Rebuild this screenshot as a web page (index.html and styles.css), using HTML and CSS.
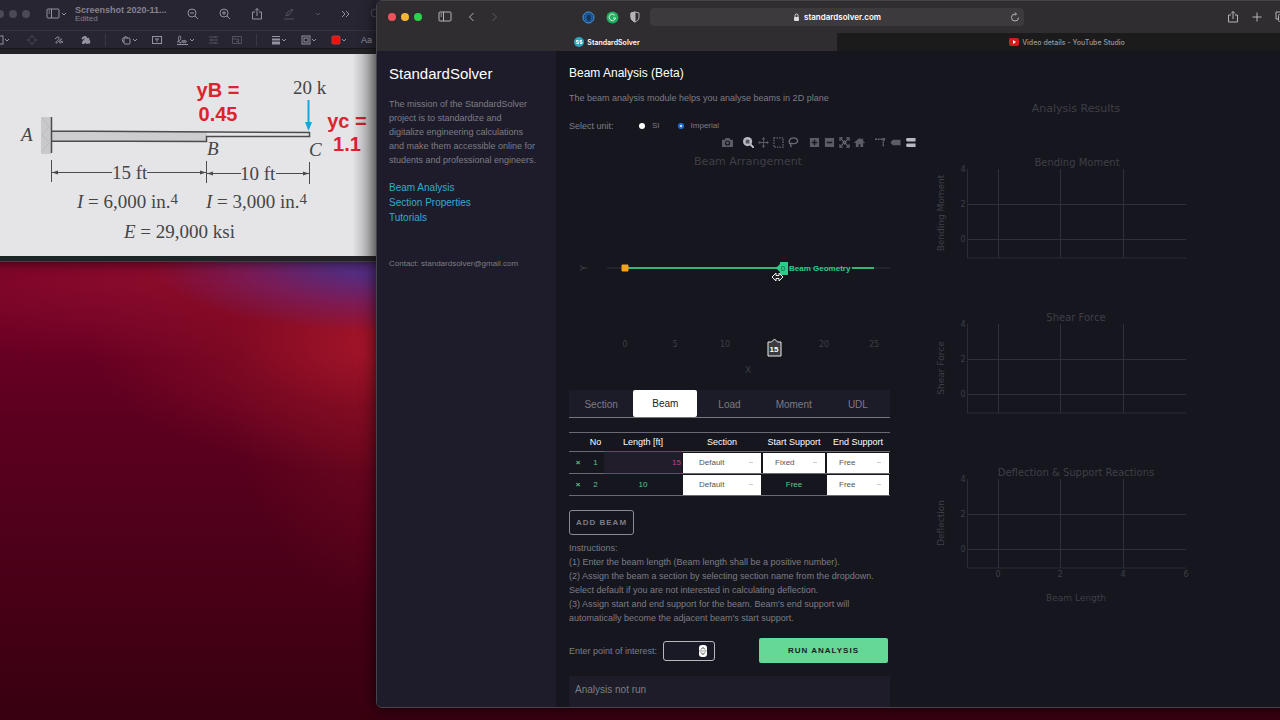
FILE: index.html
```html
<!DOCTYPE html>
<html lang="en">

<head>
    <meta charset="UTF-8">
    <meta name="viewport" content="width=device-width, initial-scale=1.0">
    <title>StandardSolver</title>
    <link rel="stylesheet" href="styles.css">
</head>

<body>
    <!-- shared icons -->
    <svg class="sprite" aria-hidden="true">
        <symbol id="chev" viewBox="0 0 6 10"><path d="M1 4l2 2 2-2" /></symbol>
        <symbol id="panel" viewBox="0 0 14 12"><rect x="1" y="1" width="12" height="9" rx="1" /><path d="M5.500 1v9M2.500 3h1.500M2.500 5h1.500" /></symbol>
        <symbol id="share" viewBox="0 0 12 14"><path d="M4 5H1.500v7h9V5H8M6 9V1.500M4 3.500l2-2 2 2" /></symbol>
        <symbol id="pen" viewBox="0 0 10 10"><path d="M1 4c2-2 4-3 4-1S1 7 2 8s3-3 5-4-3 4-1 4 1-2 2-2 0 2 1 2" /></symbol>
    </svg>

    <div class="desktop">
        <section class="preview">
            <header class="preview-bar">
                <div class="dots"><i></i><i></i><i></i></div>
                <button class="icon-btn view-btn" aria-label="View"><svg width="14" height="12"><use href="#panel" /></svg><svg width="6" height="10"><use href="#chev" /></svg></button>
                <div class="file-name">
                    <strong>Screenshot 2020-11...</strong>
                    <span>Edited</span>
                </div>
                <div class="preview-tools">
                    <button class="icon-btn" aria-label="Zoom out"><svg width="12" height="12" viewBox="0 0 12 12"><circle cx="5" cy="5" r="4" /><path d="M8 8l3 3M3 5h4" /></svg></button>
                    <button class="icon-btn" aria-label="Zoom in"><svg width="12" height="12" viewBox="0 0 12 12"><circle cx="5" cy="5" r="4" /><path d="M8 8l3 3M3 5h4M5 3v4" /></svg></button>
                    <button class="icon-btn" aria-label="Share"><svg width="12" height="14"><use href="#share" /></svg></button>
                    <button class="icon-btn faint" aria-label="Markup"><svg width="12" height="12" viewBox="0 0 12 12"><path d="M3 8l1-3 5-4 1 1-4 5zM1 11h10" /></svg></button>
                    <button class="icon-btn faint" aria-label="Markup options"><svg width="6" height="10"><use href="#chev" /></svg></button>
                    <button class="icon-btn" aria-label="More"><svg width="9" height="8" viewBox="0 0 9 8"><path d="M1 1l3 3-3 3M5 1l3 3-3 3" /></svg></button>
                    <button class="icon-btn faint" aria-label="Search"><svg width="12" height="12" viewBox="0 0 12 12"><circle cx="5" cy="5" r="4" /><path d="M8 8l3 3" /></svg></button>
                </div>
            </header>

            <div class="markup-bar">
                <div class="markup-group draw">
                    <button class="icon-btn" aria-label="Selection"><svg width="10" height="10" viewBox="0 0 10 10"><rect x="0" y="1" width="9" height="8" /></svg><svg width="6" height="10"><use href="#chev" /></svg></button>
                    <button class="icon-btn faint" aria-label="Instant alpha"><svg width="10" height="10" viewBox="0 0 10 10"><path d="M5 0v3M5 7v3M0 5h3M7 5h3M2 2l1 1M7 7l1 1M8 2L7 3M3 7L2 8" /></svg></button>
                    <button class="icon-btn" aria-label="Sketch"><svg width="10" height="10"><use href="#pen" /></svg></button>
                    <button class="icon-btn thick" aria-label="Draw"><svg width="10" height="10"><use href="#pen" /></svg></button>
                </div>
                <span class="divider"></span>
                <div class="markup-group">
                    <button class="icon-btn" aria-label="Shapes"><svg width="12" height="10" viewBox="0 0 12 10"><path d="M4 7H3a3 3 0 1 1 5-4" /><rect x="4" y="3" width="6" height="6" rx="1" /></svg><svg width="6" height="10"><use href="#chev" /></svg></button>
                    <button class="icon-btn" aria-label="Text"><svg width="10" height="10" viewBox="0 0 10 10"><rect x="0.500" y="1.500" width="9" height="7" /><path d="M3 4h4M5 4v3" /></svg></button>
                    <button class="icon-btn" aria-label="Sign"><svg width="13" height="10" viewBox="0 0 13 10"><path d="M1 7c3 0 5-5 3-6S2 8 4 8s2-3 3-3-1 3 0 3 1-3 2-3-1 3 0 3 1-2 2-2M1 9.500h11" /></svg><svg width="6" height="10"><use href="#chev" /></svg></button>
                    <button class="icon-btn faint" aria-label="Adjust color"><svg width="9" height="10" viewBox="0 0 9 10"><path d="M0 2h9M0 5h9M0 8h9M6 1v2M3 4v2M6 7v2" /></svg></button>
                    <button class="icon-btn faint" aria-label="Adjust size"><svg width="10" height="10" viewBox="0 0 10 10"><path d="M.5 1.500h9v7h-9zM.5 4h6v4.500M4 6.500h2" /></svg></button>
                </div>
                <span class="divider"></span>
                <div class="markup-group">
                    <button class="icon-btn" aria-label="Line style"><svg width="10" height="10" viewBox="0 0 10 10"><path d="M1 1.500h8" /><path d="M1 4.500h8" stroke-width="2" /><path d="M1 8h8" stroke-width="3" /></svg><svg width="6" height="10"><use href="#chev" /></svg></button>
                    <button class="icon-btn" aria-label="Border color"><svg width="10" height="10" viewBox="0 0 10 10"><rect x="1" y="1" width="8" height="8" /><rect x="3" y="3" width="4" height="4" /></svg><svg width="6" height="10"><use href="#chev" /></svg></button>
                    <button class="icon-btn" aria-label="Fill color"><svg width="10" height="10" viewBox="0 0 10 10"><rect x="1" y="1" width="8" height="8" rx="1" fill="#f5100a" stroke="#a8403e" /></svg><svg width="6" height="10"><use href="#chev" /></svg></button>
                    <button class="icon-btn font-btn">Aa</button>
                </div>
            </div>

            <svg class="drawing" width="376" height="202" viewBox="0 0 376 202" role="img" aria-label="Cantilever beam">
                <defs>
                    <linearGradient id="edge">
                        <stop offset="0" stop-color="#000" stop-opacity="0" />
                        <stop offset="1" stop-color="#000" stop-opacity="0.300" />
                    </linearGradient>
                </defs>
                <rect x="41" y="63" width="10" height="37" fill="#c9c9cb" />
                <path d="M43 64l6 9-7 8 7 8-7 8" stroke="#bbb" fill="none" />
                <path d="M51 77h156v10H51z" fill="#cdcdcf" />
                <g stroke="#4b4b4d" fill="none">
                    <path d="M51.500 63v36M51 77l258.500 1.500v4H206.500v5L51 87" stroke-width="1.500" />
                    <path d="M51.500 106v22M206.500 107v22M309.500 108v22M52 118.500h60M147 118.500h59M207 119.500h34M276 119.500h33" />
                </g>
                <path d="M52 118.500l6-2v4zM206 118.500l-6-2v4zM207 119.500l6-2v4zM309 119.500l-6-2v4z" fill="#4b4b4d" />
                <path d="M308.500 46v25" stroke="#18a5dc" stroke-width="2" />
                <path d="M305 68h7l-3.500 9z" fill="#18a5dc" />
                <g class="serif">
                    <text x="293" y="40">20 k</text>
                    <text x="21" y="87" class="it">A</text>
                    <text x="207" y="101" class="it">B</text>
                    <text x="309" y="102" class="it">C</text>
                    <text x="112" y="125">15 ft</text>
                    <text x="240" y="126">10 ft</text>
                    <text x="77" y="154"><tspan class="it">I</tspan> = 6,000 in.<tspan class="sup" dy="-4">4</tspan></text>
                    <text x="206" y="154"><tspan class="it">I</tspan> = 3,000 in.<tspan class="sup" dy="-4">4</tspan></text>
                    <text x="124" y="184"><tspan class="it">E</tspan> = 29,000 ksi</text>
                </g>
                <g class="note">
                    <text x="218" y="43">yB =</text>
                    <text x="218" y="67">0.45</text>
                    <text x="347" y="74">yc =</text>
                    <text x="347" y="97">1.1</text>
                </g>
                <rect x="352" width="24" height="202" fill="url(#edge)" />
            </svg>
        </section>

        <section class="browser">
            <header class="browser-bar">
                <div class="bar-left">
                    <div class="dots lights"><i></i><i></i><i></i></div>
                    <button class="icon-btn light" aria-label="Sidebar"><svg width="14" height="12"><use href="#panel" /></svg></button>
                    <button class="icon-btn light" aria-label="Back"><svg width="7" height="10" viewBox="0 0 7 10"><path d="M5.500 1l-4 4 4 4" /></svg></button>
                    <button class="icon-btn dim" aria-label="Forward"><svg width="7" height="10" viewBox="0 0 7 10"><path d="M1.500 1l4 4-4 4" /></svg></button>
                    <div class="extensions">
                        <button class="icon-btn" aria-label="Blocker"><svg width="13" height="13" viewBox="0 0 13 13"><circle cx="6.500" cy="6.500" r="5.500" fill="#173f70" stroke="#4aa3e8" /><circle cx="6.500" cy="6.500" r="4" fill="#1c62ad" stroke="none" /><path d="M5 4v4l1.500 2L8.500 8V4.500L6.500 4v3" fill="#173556" stroke="#173556" /></svg></button>
                        <button class="icon-btn" aria-label="Grammar"><svg width="13" height="13" viewBox="0 0 13 13"><circle cx="6.500" cy="6.500" r="6" fill="#25ad64" stroke="none" /><path d="M9 4.500A3.200 3.200 0 1 0 9.500 7H7" stroke="#d9f5e5" /></svg></button>
                        <button class="icon-btn light" aria-label="Privacy report"><svg width="10" height="12" viewBox="0 0 10 12"><path d="M5 1l4 1v4c0 3-2 4-4 5-2-1-4-2-4-5V2z" /><path d="M5 1v10c-2-1-4-2-4-5V2z" fill="#b5b3b6" /></svg></button>
                    </div>
                </div>
                <div class="address">
                    <svg width="7" height="9" viewBox="0 0 7 9"><rect x="1" y="4" width="5" height="4" rx="1" fill="#ddd" /><path d="M2 4V2.500a1.500 1.500 0 0 1 3 0V4" fill="none" stroke="#ddd" /></svg>
                    <span>standardsolver.com</span>
                    <button class="icon-btn light reload" aria-label="Reload"><svg width="10" height="10" viewBox="0 0 10 10"><path d="M8.500 5.500A3.500 3.500 0 1 1 5 2h1M5 .5L6.500 2 5 3.500" /></svg></button>
                </div>
                <div class="bar-right">
                    <button class="icon-btn light" aria-label="Share"><svg width="12" height="14"><use href="#share" /></svg></button>
                    <button class="icon-btn light" aria-label="New tab"><svg width="10" height="10" viewBox="0 0 10 10"><path d="M5 0.500v9M.5 5h9" /></svg></button>
                    <button class="icon-btn light" aria-label="Tab overview"><svg width="12" height="12" viewBox="0 0 12 12"><path d="M3 8H1V1h7v2" /><rect x="3.500" y="3.500" width="7" height="7" rx="1" /></svg></button>
                </div>
            </header>
            <nav class="browser-tabs">
                <a href="#" class="browser-tab current"><svg width="10" height="10" viewBox="0 0 10 10"><circle cx="5" cy="5" r="5" fill="#2fa5c0" /><path d="M4.500 3.500H2.500V5h2v1.500h-2M8 3.500H6V5h2v1.500H6" fill="none" stroke="#fff" /></svg>StandardSolver</a>
                <a href="#" class="browser-tab"><svg width="10" height="8" viewBox="0 0 10 8"><rect width="10" height="8" rx="2" fill="#d41a1a" /><path d="M4 2l3 2-3 2z" fill="#fff" /></svg>Video details - YouTube Studio</a>
            </nav>

            <div class="page">
                <aside class="sidebar">
                    <h1>StandardSolver</h1>
                    <p>The mission of the StandardSolver project is to standardize and digitalize engineering calculations and make them accessible online for students and professional engineers.</p>
                    <nav class="links">
                        <a href="#">Beam Analysis</a>
                        <a href="#">Section Properties</a>
                        <a href="#">Tutorials</a>
                    </nav>
                    <p class="contact">Contact: standardsolver@gmail.com</p>
                </aside>

                <main class="solver">
                    <h2>Beam Analysis (Beta)</h2>
                    <p class="intro">The beam analysis module helps you analyse beams in 2D plane</p>
                    <div class="units">
                        <span>Select unit:</span>
                        <label><input type="radio" name="unit">SI</label>
                        <label><input type="radio" name="unit" checked>Imperial</label>
                    </div>

                    <div class="modebar">
                        <div>
                            <button aria-label="Download plot"><svg viewBox="0 0 12 12"><path d="M0 3h3l1-2h4l1 2h3v8H0z" /><circle cx="6" cy="6.500" r="2.800" fill="#16161f" /><circle cx="6" cy="6.500" r="1.500" /></svg></button>
                        </div>
                        <div>
                            <button class="on" aria-label="Zoom"><svg viewBox="0 0 12 12"><circle cx="5" cy="5" r="5" /><path d="M8 7l4 4-1 1-4-4z" stroke="#b9b9c2" /><path d="M3 3h4v4H3z" fill="#55555f" /></svg></button>
                            <button aria-label="Pan"><svg viewBox="0 0 12 12"><path d="M6 0l2 2.500H6.500v3H9.500V4L12 6 9.500 8V6.500h-3v3H8L6 12 4 9.500h1.500v-3h-3V8L0 6l2.500-2v1.500h3v-3H4z" /></svg></button>
                            <button aria-label="Box select"><svg viewBox="0 0 12 12"><rect x="1" y="1" width="10" height="10" fill="none" stroke="#6a6a73" stroke-width="1.500" stroke-dasharray="1.500 1.300" /></svg></button>
                            <button aria-label="Lasso"><svg viewBox="0 0 12 12"><path d="M3 8C0 6 1 1 6 1s6 5 2 6-4-1-5 0 1 2 0 4" fill="none" stroke="#6a6a73" stroke-width="1.500" /></svg></button>
                        </div>
                        <div>
                            <button aria-label="Zoom in"><svg viewBox="0 0 12 12"><path d="M1 1h10v10H1z" /><path d="M3 6h6M6 3v6" stroke="#16161f" stroke-width="1.500" /></svg></button>
                            <button aria-label="Zoom out"><svg viewBox="0 0 12 12"><path d="M1 1h10v10H1z" /><path d="M3 6h6" stroke="#16161f" stroke-width="1.500" /></svg></button>
                            <button aria-label="Autoscale"><svg viewBox="0 0 12 12"><path d="M1 4V1h3M8 1h3v3M11 8v3H8M4 11H1V8M2 2l3 3M10 2L7 5M2 10l3-3M10 10L7 7M4.500 6L6 4.500 7.500 6 6 7.500z" fill="none" stroke="#6a6a73" stroke-width="1.200" /></svg></button>
                            <button aria-label="Reset axes"><svg viewBox="0 0 12 12"><path d="M0 6l6-5 2 1.700V2h2v2.500L12 6l-1 .8-1-.8v5H7V8H5v3H2V6l-1 .8z" /></svg></button>
                        </div>
                        <div>
                            <button aria-label="Spike lines"><svg viewBox="0 0 12 12"><path d="M0 2.500h9M9 5v6" fill="none" stroke="#6a6a73" stroke-width="1.500" stroke-dasharray="2 1" /><path d="M8 1h3v3H8z" /></svg></button>
                            <button aria-label="Show closest data"><svg viewBox="0 0 12 12"><path d="M3 3h8.500v6H3L.5 6z" /></svg></button>
                            <button class="on" aria-label="Compare data"><svg viewBox="0 0 12 12"><path d="M2 1h9.500v4H2L1 3zM2 7h9.500v4H2L1 9z" /></svg></button>
                        </div>
                    </div>

                    <svg class="plot beam-plot" width="350" height="232" viewBox="0 0 350 232" role="img" aria-label="Beam arrangement plot">
                        <path d="M56 45v145M106 45v145M156 45v145M205 45v145M255 45v145M305 45v145M38 84h283M38 152h283" stroke="#191922" />
                        <text x="179" y="15" class="title">Beam Arrangement</text>
                        <path d="M38 118h283" stroke="#303039" />
                        <path d="M56 118h152M283 118h22" stroke="#35b574" stroke-width="2" />
                        <path d="M53 115h6v6h-6z" fill="#f5a11c" stroke="#f5a11c" />
                        <path d="M207 118l4-4v-2h8v13h-8v-3z" fill="#2dcb89" />
                        <text x="214" y="121" class="hover-num">0</text>
                        <text x="220" y="121" class="hover-name">Beam Geometry</text>
                        <path d="M203 127l4-4v2.500h3V123l4 4-4 4v-2.500h-3v2.500z" fill="#222" stroke="#eee" />
                        <text class="tick" x="56" y="197">0</text>
                        <text class="tick" x="106" y="197">5</text>
                        <text class="tick" x="156" y="197">10</text>
                        <text class="tick" x="255" y="197">20</text>
                        <text class="tick" x="305" y="197">25</text>
                        <path d="M199 192h3.500l3-3 3 3h3.500v14h-13z" fill="#3a3a42" stroke="#eee" />
                        <text x="205" y="202" class="spike">15</text>
                        <text x="179" y="223" class="axis">X</text>
                        <text class="axis" transform="translate(18 118) rotate(-90)">Y</text>
                    </svg>

                    <div class="form">
                        <div class="tabs">
                            <button>Section</button>
                            <button class="active">Beam</button>
                            <button>Load</button>
                            <button>Moment</button>
                            <button>UDL</button>
                        </div>

                        <table class="beams">
                            <colgroup>
                                <col class="col-del">
                                <col class="col-no">
                                <col class="col-length">
                                <col class="col-section">
                                <col class="col-support">
                                <col class="col-support">
                            </colgroup>
                            <thead>
                                <tr>
                                    <th></th>
                                    <th>No</th>
                                    <th>Length [ft]</th>
                                    <th>Section</th>
                                    <th>Start Support</th>
                                    <th>End Support</th>
                                </tr>
                            </thead>
                            <tbody>
                                <tr>
                                    <td><button class="delete" aria-label="Delete beam 1">×</button></td>
                                    <td>1</td>
                                    <td class="editing"><input type="text" value="15" aria-label="Length of beam 1"></td>
                                    <td><select aria-label="Section of beam 1"><option>Default</option></select></td>
                                    <td><select class="narrow" aria-label="Start support of beam 1"><option>Fixed</option></select></td>
                                    <td><select class="narrow" aria-label="End support of beam 1"><option>Free</option></select></td>
                                </tr>
                                <tr>
                                    <td><button class="delete" aria-label="Delete beam 2">×</button></td>
                                    <td>2</td>
                                    <td>10</td>
                                    <td><select aria-label="Section of beam 2"><option>Default</option></select></td>
                                    <td>Free</td>
                                    <td><select class="narrow" aria-label="End support of beam 2"><option>Free</option></select></td>
                                </tr>
                            </tbody>
                        </table>

                        <button class="add">Add Beam</button>

                        <p class="help">Instructions:<br>
                            (1) Enter the beam length (Beam length shall be a positive number).<br>
                            (2) Assign the beam a section by selecting section name from the dropdown. Select default if you are not interested in calculating deflection.<br>
                            (3) Assign start and end support for the beam. Beam's end support will automatically become the adjacent beam's start support.</p>

                        <div class="run-row">
                            <label for="poi">Enter point of interest:</label>
                            <div class="number">
                                <input type="number" id="poi">
                                <svg width="8" height="12" viewBox="0 0 8 12"><rect width="8" height="12" rx="3" fill="#fff" /><path d="M2 4.500l2-2 2 2M2 7.500l2 2 2-2" fill="none" stroke="#333" /><path d="M0 6h8" stroke="#999" /></svg>
                            </div>
                            <button class="run">Run Analysis</button>
                        </div>

                        <div class="status">Analysis not run</div>
                    </div>
                </main>

                <section class="results">
                    <svg class="plot" width="280" height="520" viewBox="0 0 280 520" role="img" aria-label="Analysis results">
                        <defs>
                            <g id="grid">
                                <path d="M70.500 0v89M132.500 0v89M195.500 0v89M39 35.500h219M39 70.500h219" stroke="#303039" />
                                <path d="M39.500 0v89M39 89h219" stroke="#2b2b34" />
                            </g>
                        </defs>
                        <text x="148" y="22" class="title">Analysis Results</text>
                        <g transform="translate(0 79)">
                            <use href="#grid" />
                            <text x="149" y="-3" class="subtitle">Bending Moment</text>
                            <text class="tick" x="35" y="3">4</text>
                            <text class="tick" x="35" y="38">2</text>
                            <text class="tick" x="35" y="73">0</text>
                            <text class="axis" transform="translate(16 44) rotate(-90)">Bending Moment</text>
                        </g>
                        <g transform="translate(0 234)">
                            <use href="#grid" />
                            <text x="148" y="-3" class="subtitle">Shear Force</text>
                            <text class="tick" x="35" y="3">4</text>
                            <text class="tick" x="35" y="38">2</text>
                            <text class="tick" x="35" y="73">0</text>
                            <text class="axis" transform="translate(16 44) rotate(-90)">Shear Force</text>
                        </g>
                        <g transform="translate(0 389)">
                            <use href="#grid" />
                            <text x="148" y="-3" class="subtitle">Deflection &amp; Support Reactions</text>
                            <text class="tick" x="35" y="3">4</text>
                            <text class="tick" x="35" y="38">2</text>
                            <text class="tick" x="35" y="73">0</text>
                            <text class="axis" transform="translate(16 44) rotate(-90)">Deflection</text>
                            <text class="tick" x="70" y="98">0</text>
                            <text class="tick" x="132" y="98">2</text>
                            <text class="tick" x="195" y="98">4</text>
                            <text class="tick" x="258" y="98">6</text>
                            <text class="axis" x="148" y="122">Beam Length</text>
                        </g>
                    </svg>
                </section>
            </div>
        </section>
    </div>
</body>

</html>
```

FILE: styles.css
```css
* {
    box-sizing: border-box;
}

body {
    margin: 0;
    font-family: "Liberation Sans", Arial, sans-serif;
    font-size: 9px;
    color: #7d7c84;
}

button,
input,
select {
    font: inherit;
    color: inherit;
    border: none;
    background: none;
    padding: 0;
    margin: 0;
}

a {
    text-decoration: none;
}

svg {
    display: block;
}

.sprite {
    display: none;
}

.desktop {
    position: relative;
    height: 100vh;
    overflow: hidden;
    background:
        radial-gradient(ellipse 230px 70px at 380px 262px, #552d80 20%, rgba(120, 30, 95, 0.8) 60%, rgba(130, 20, 60, 0) 100%),
        radial-gradient(ellipse 300px 130px at 390px 345px, rgba(162, 20, 40, 0.95) 10%, rgba(140, 14, 36, 0.6) 50%, rgba(100, 0, 32, 0) 100%),
        radial-gradient(ellipse 160px 240px at 385px 370px, rgba(130, 16, 30, 0.6), rgba(100, 0, 30, 0) 100%),
        radial-gradient(ellipse 320px 80px at 150px 280px, rgba(142, 14, 44, 0.8), rgba(110, 0, 34, 0) 100%),
        linear-gradient(#780028 260px, #5c001f 420px, #4d0019 550px, #380010 720px);
}

/* windows */

.preview {
    position: absolute;
    left: -6px;
    top: 0;
    width: 400px;
    background: #232327;
    border-bottom: 1px solid #3f3f43;
    padding-bottom: 5px;
    box-shadow: 0 2px 10px rgba(0, 0, 0, 0.5);
}

.preview-bar,
.markup-bar {
    display: flex;
    align-items: center;
    background: #272531;
}

.preview-bar {
    height: 30px;
    gap: 16px;
    padding: 0 0 3px 2px;
}

.markup-bar {
    height: 19px;
    justify-content: space-between;
    padding-right: 22px;
    border-top: 1px solid #34323d;
    border-bottom: 1px solid #17171b;
    margin-bottom: 5px;
}

.markup-group {
    display: flex;
    align-items: center;
    gap: 14px;
}

.markup-group.draw {
    gap: 17px;
}

.divider {
    width: 1px;
    height: 12px;
    background: #3a3843;
}

.dots {
    display: flex;
    gap: 5px;
}

.dots i {
    width: 8px;
    height: 8px;
    border-radius: 50%;
    background: #4b4954;
}

.lights i:nth-child(1) {
    background: #f1515a;
}

.lights i:nth-child(2) {
    background: #f5b53a;
}

.lights i:nth-child(3) {
    background: #30d04c;
}

.icon-btn {
    display: flex;
    align-items: center;
    color: #9492a0;
    fill: none;
    stroke: currentColor;
}

.icon-btn.faint {
    color: #54525e;
}

.icon-btn.light {
    color: #b5b3b6;
}

.icon-btn.dim {
    color: #5d5b5e;
}

.icon-btn.thick {
    stroke-width: 2;
}

.view-btn {
    gap: 1px;
}

.font-btn {
    stroke: none;
}

.file-name {
    width: 96px;
    margin-left: -8px;
    color: #85838f;
    line-height: 10px;
}

.file-name strong,
.file-name span {
    display: block;
    white-space: nowrap;
}

.file-name span {
    font-size: 8px;
    line-height: 8px;
}

.preview-tools {
    display: flex;
    flex: 1;
    align-items: center;
    justify-content: space-between;
    padding-right: 12px;
}

.drawing {
    margin-left: 6px;
    background: #e5e5e7;
}

.serif {
    font-family: "Liberation Serif", "Times New Roman", serif;
    font-size: 19px;
    fill: #454547;
}

.it {
    font-style: italic;
}

.sup {
    font-size: 15px;
}

.note {
    font-size: 20px;
    font-weight: bold;
    fill: #dc2430;
    text-anchor: middle;
}

.browser {
    position: absolute;
    left: 376px;
    right: -18px;
    top: 0;
    bottom: 12px;
    display: flex;
    flex-direction: column;
    overflow: hidden;
    background: #16161f;
    border: 1px solid #46444a;
    border-radius: 6px;
    box-shadow: 0 0 16px rgba(0, 0, 0, 0.7);
}

.browser-bar {
    display: grid;
    grid-template-columns: 1fr 374px 1fr;
    align-items: center;
    height: 32px;
    flex: none;
    background: #2f2d2f;
}

.bar-left {
    display: flex;
    align-items: center;
    gap: 16px;
    padding: 0 10px 0 11px;
}

.extensions {
    display: flex;
    align-items: center;
    gap: 11px;
    margin-left: auto;
}

.address {
    position: relative;
    display: flex;
    align-items: center;
    justify-content: center;
    gap: 4px;
    height: 18px;
    border-radius: 4px;
    background: #3c3a3d;
    color: #fff;
    font-family: Inter, sans-serif;
    font-size: 8px;
    font-weight: 600;
}

.reload {
    position: absolute;
    right: 4px;
}

.bar-right {
    display: flex;
    align-items: center;
    justify-content: flex-end;
    gap: 13px;
    padding-right: 10px;
}

.browser-tabs {
    display: grid;
    grid-template-columns: 1fr 1fr;
    height: 18px;
    flex: none;
}

.browser-tab {
    display: flex;
    align-items: center;
    justify-content: center;
    gap: 3px;
    background: #1b1b1b;
    color: #98979a;
    font-family: Inter, sans-serif;
    font-size: 7px;
    font-weight: 500;
}

.browser-tab.current {
    background: #2f2d2f;
    color: #fff;
    font-weight: 600;
}

/* page */

.page {
    display: grid;
    grid-template-columns: 179px 364px 1fr;
    flex: 1;
    min-height: 0;
}

.sidebar {
    background: #1e1c2a;
    padding: 14px 18px 14px 12px;
}

h1,
h2 {
    margin: 0;
    color: #fff;
    font-weight: normal;
}

h1 {
    font-size: 15px;
    line-height: 18px;
}

h2 {
    font-size: 12px;
    line-height: 16px;
}

p {
    margin: 0;
    line-height: 14px;
}

.sidebar p {
    margin-top: 14px;
}

.links {
    display: flex;
    flex-direction: column;
    margin-top: 13px;
    font-size: 10px;
    line-height: 15px;
}

.links a {
    color: #36a9cf;
}

.sidebar .contact {
    margin-top: 32px;
    font-size: 8px;
}

.solver {
    padding: 14px 0 0 13px;
}

.intro {
    margin-top: 10px;
}

.units {
    display: flex;
    align-items: center;
    gap: 18px;
    margin-top: 14px;
    line-height: 14px;
}

.units span {
    width: 52px;
}

.units label {
    display: flex;
    align-items: center;
    gap: 7px;
    font-size: 8px;
}

.units input {
    appearance: none;
    width: 6px;
    height: 6px;
    border-radius: 50%;
    background: #fff;
}

.units input:checked {
    border: 2px solid #1f6fe0;
}

.modebar {
    display: flex;
    justify-content: flex-end;
    gap: 6px;
    padding-right: 2px;
    margin-top: 3px;
}

.modebar div {
    display: flex;
}

.modebar button {
    width: 15px;
    height: 12px;
    fill: #5c5c66;
}

.modebar .on {
    fill: #b9b9c2;
}

.modebar svg {
    width: 11px;
    height: 11px;
    margin: 0 auto;
}

.plot {
    font-family: "DejaVu Sans", Verdana, sans-serif;
    fill: #3f3f45;
}

.beam-plot {
    margin-top: 2px;
}

.plot text {
    text-anchor: middle;
}

.plot .title {
    font-size: 11px;
}

.plot .subtitle {
    font-size: 10px;
}

.plot .axis {
    font-size: 9px;
}

.plot .tick {
    font-size: 8px;
}

.plot .hover-num,
.plot .hover-name,
.plot .spike {
    font-family: "Liberation Sans", Arial, sans-serif;
    font-size: 8px;
}

.plot .hover-num {
    fill: #14603f;
}

.plot .hover-name {
    fill: #2dcb89;
    font-weight: bold;
    text-anchor: start;
}

.plot .spike {
    fill: #fff;
    font-weight: bold;
}

.form {
    width: 321px;
    margin-top: 8px;
}

.tabs {
    display: grid;
    grid-template-columns: repeat(5, 1fr);
    height: 28px;
    background: #1c1b28;
    border-bottom: 1px solid #77767e;
}

.tabs button {
    padding-top: 2px;
    font-size: 10px;
}

.tabs .active {
    padding-top: 0;
    background: #fff;
    color: #222;
    border-radius: 2px;
}

.beams {
    width: 100%;
    margin-top: 14px;
    table-layout: fixed;
    border-collapse: collapse;
    color: #5ec48c;
    font-size: 8px;
    text-align: center;
}

.col-del {
    width: 18px;
}

.col-no {
    width: 17px;
}

.col-length {
    width: 78px;
}

.col-section {
    width: 80px;
}

.beams tr {
    border-top: 1px solid #6b6a72;
    border-bottom: 1px solid #6b6a72;
}

.beams th {
    height: 19px;
    padding: 0;
    color: #fff;
    font-size: 9px;
    font-weight: normal;
    white-space: nowrap;
}

.beams td {
    height: 22px;
    padding: 0 1px;
}

.beams .editing {
    background: #221d2b;
    border: 1px solid #94316d;
    border-width: 1px 0;
    color: #c2408f;
}

.editing input {
    width: 100%;
    text-align: right;
}

.delete {
    font-weight: bold;
}

.beams select {
    display: block;
    appearance: none;
    width: 100%;
    height: 20px;
    padding-left: 16px;
    color: #555;
    background: #fff linear-gradient(#ccc, #ccc) no-repeat right 8px center / 4px 1px;
}

.beams .narrow {
    padding-left: 12px;
}

.add {
    display: block;
    height: 25px;
    width: 65px;
    margin-top: 14px;
    border: 1px solid #8a8991;
    border-radius: 3px;
    font-size: 8px;
    font-weight: bold;
    letter-spacing: 1px;
    text-transform: uppercase;
    white-space: nowrap;
}

.help {
    margin-top: 6px;
}

.run-row {
    display: flex;
    align-items: center;
    gap: 6px;
    margin-top: 13px;
    padding-right: 2px;
}

.number {
    position: relative;
}

.number input {
    display: block;
    width: 52px;
    height: 20px;
    padding-left: 4px;
    border: 1px solid #b9b8c0;
    border-radius: 3px;
    appearance: textfield;
    background: #1a1926;
}

.number svg {
    position: absolute;
    right: 8px;
    top: 4px;
}

.run {
    width: 129px;
    height: 25px;
    margin-left: auto;
    border-radius: 2px;
    background: #66d896;
    color: #17231e;
    font-size: 8px;
    font-weight: bold;
    letter-spacing: 1px;
    text-transform: uppercase;
}

.status {
    margin-top: 13px;
    padding: 6px 6px 20px;
    background: #1e1c28;
    font-size: 10px;
    line-height: 15px;
}

.results {
    padding: 39px 0 0 8px;
}
```
